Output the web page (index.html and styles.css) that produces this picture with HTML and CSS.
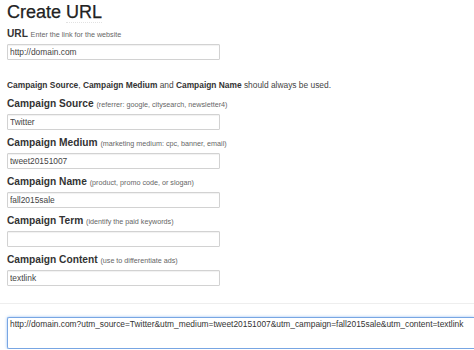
FILE: index.html
```html
<!DOCTYPE html>
<html lang="en">

<head>
  <meta charset="UTF-8">
  <meta name="viewport" content="width=device-width, initial-scale=1.0">
  <title>Create URL</title>
  <link rel="stylesheet" href="styles.css">
</head>

<body>
  <div class="page">
    <h1>Create <span class="abbr">URL</span></h1>
    <form class="builder">
      <div class="field field-url">
        <label>URL <small>Enter the link for the website</small></label>
        <input type="text" value="http://domain.com">
      </div>

      <p class="hint"><b>Campaign Source</b>, <b>Campaign Medium</b> and <b>Campaign Name</b> should always be used.</p>

      <div class="field">
        <label>Campaign Source <small>(referrer: google, citysearch, newsletter4)</small></label>
        <input type="text" value="Twitter">
      </div>
      <div class="field">
        <label>Campaign Medium <small>(marketing medium: cpc, banner, email)</small></label>
        <input type="text" value="tweet20151007">
      </div>
      <div class="field">
        <label>Campaign Name <small>(product, promo code, or slogan)</small></label>
        <input type="text" value="fall2015sale">
      </div>
      <div class="field">
        <label>Campaign Term <small>(identify the paid keywords)</small></label>
        <input type="text" value="">
      </div>
      <div class="field">
        <label>Campaign Content <small>(use to differentiate ads)</small></label>
        <input type="text" value="textlink">
      </div>

      <hr>

      <!-- the output box runs off the right edge, so the right border is never seen -->
      <div class="result-box">
        <textarea class="result">http://domain.com?utm_source=Twitter&amp;utm_medium=tweet20151007&amp;utm_campaign=fall2015sale&amp;utm_content=textlink</textarea>
      </div>
    </form>
  </div>
</body>

</html>
```

FILE: styles.css
```css
html,
body {
  overflow: hidden;
}

body {
  margin: 0;
  background-color: #fff;
  color: #333;
  font-family: "Liberation Sans", Arial, sans-serif;
}

.page {
  padding: 0 7px;
}

h1 {
  margin: 0;
  font-size: 18px;
  line-height: 24px;
  font-weight: normal;
  color: #222;
  -webkit-text-stroke: 0.25px #222;
}

.abbr {
  border-bottom: 1px dotted #e2e2e2;
}

.field {
  margin-top: 6px;
}

.field-url {
  margin-top: 3px;
}

.field label {
  display: block;
  font-size: 10.2px;
  line-height: 14px;
  font-weight: bold;
  color: #333;
}

.field label small {
  font-size: 7.2px;
  font-weight: normal;
  color: #666;
}

.field input {
  display: block;
  box-sizing: border-box;
  width: 213px;
  height: 16px;
  margin: 2px 0 0;
  padding: 0 2px;
  border: 1px solid #d2d2d2;
  border-radius: 1px;
  box-shadow: inset 0 1px 1px rgba(0, 0, 0, 0.06);
  font-family: "Liberation Sans", Arial, sans-serif;
  font-size: 8.4px;
  color: #444;
  outline: none;
}

.hint {
  margin: 19px 0 0;
  font-size: 8.4px;
  line-height: 12px;
  color: #444;
}

.hint b {
  color: #333;
}

hr {
  margin: 16.5px -7px 0;
  border: 0;
  border-top: 1px solid #eee;
}

.result-box {
  height: 32px;
  box-sizing: border-box;
  margin: 13px -7px 0 0;
  border: 1px solid #78a6e3;
  border-right: 0;
  border-radius: 2px 0 0 2px;
  box-shadow: 0 0 3px rgba(82, 150, 236, 0.6);
}

.result {
  display: block;
  box-sizing: border-box;
  width: 100%;
  height: 100%;
  margin: 0;
  padding: 1px 2px;
  border: 0;
  background: transparent;
  font-family: "Liberation Sans", Arial, sans-serif;
  font-size: 8.4px;
  line-height: 11px;
  color: #333;
  white-space: nowrap;
  overflow: hidden;
  resize: none;
  outline: none;
}
```
